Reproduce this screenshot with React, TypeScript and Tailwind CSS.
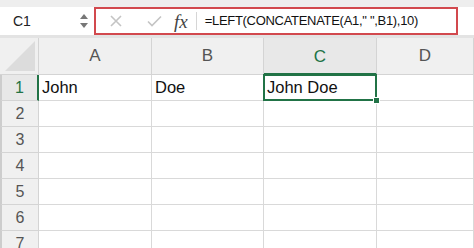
import React from 'react';

const COLS = ['A', 'B', 'C', 'D'];
const ROWS = [1, 2, 3, 4, 5, 6, 7];
const DATA: Record<string, string> = { A1: 'John', B1: 'Doe', C1: 'John Doe' };

export default function App() {
  const selCol = 'C';
  const selRow = 1;

  return (
    <div className="w-[474px] h-[248px] overflow-hidden bg-white font-['Liberation_Sans',Arial,sans-serif] text-[#222]">
      {/* top strip */}
      <div className="h-[7px] bg-[#eeeeee]" />

      {/* formula bar */}
      <div className="h-[28px] flex items-stretch bg-white">
        <div className="w-[94px] flex items-center pl-[13px] pr-[6px]">
          <span className="text-[14px] flex-1">C1</span>
          <div className="flex flex-col items-center gap-[4px]">
            <svg width="8" height="5" viewBox="0 0 8 5"><path d="M4 0L8 5H0Z" fill="#777" /></svg>
            <svg width="8" height="5" viewBox="0 0 8 5"><path d="M0 0H8L4 5Z" fill="#777" /></svg>
          </div>
        </div>
        <div className="w-[364px] border-2 border-[#d2494e] flex items-center">
          <div className="w-[76px] flex items-center justify-between pl-[14px] pr-[10px]">
            <svg width="12" height="12" viewBox="0 0 12 12">
              <path d="M1 1L11 11M11 1L1 11" stroke="#c4c4c4" strokeWidth="1.6" />
            </svg>
            <svg width="15" height="12" viewBox="0 0 15 12">
              <path d="M1 6.5L5 10.5L14 1.5" stroke="#c4c4c4" strokeWidth="1.6" fill="none" />
            </svg>
          </div>
          <span className="font-['Liberation_Serif',serif] italic text-[19px] text-[#444] leading-none pl-[2px] pr-[8px]">fx</span>
          <div className="w-px h-[18px] bg-[#d6d6d6]" />
          <span className="pl-[8px] text-[13px] tracking-[-0.3px] text-[#111] whitespace-pre">=LEFT(CONCATENATE(A1," ",B1),10)</span>
        </div>
      </div>

      {/* separator */}
      <div className="h-[3px] bg-[#e3e3e3]" />

      {/* grid */}
      <div className="grid grid-cols-[39px_113px_112px_113px_97px]">
        {/* corner */}
        <div className="h-[37px] bg-[#f0f0f0] border-r border-b border-[#d4d4d4] relative overflow-hidden">
          <div className="absolute right-[3px] bottom-[3px] w-0 h-0 border-l-[30px] border-l-transparent border-b-[30px] border-b-[#dcdcdc]" />
        </div>
        {COLS.map((c) => (
          <div
            key={c}
            className={
              c === selCol
                ? 'h-[37px] bg-[#e8e8e8] border-r border-[#d4d4d4] border-b-2 border-b-[#217346] flex items-center justify-center text-[17px] text-[#217346] pt-[2px]'
                : 'h-[37px] bg-[#f0f0f0] border-r border-b border-[#d4d4d4] flex items-center justify-center text-[17px] text-[#555]'
            }
          >
            {c}
          </div>
        ))}

        {ROWS.map((r) => (
          <React.Fragment key={r}>
            <div
              className={
                r === selRow
                  ? 'h-[26px] bg-[#e8e8e8] border-l-2 border-l-[#cdcdcd] border-b border-b-[#d4d4d4] border-r-2 border-r-[#217346] flex items-center justify-center text-[16px] text-[#217346]'
                  : 'h-[26px] bg-[#f0f0f0] border-l-2 border-l-[#cdcdcd] border-b border-r border-[#d4d4d4] flex items-center justify-center text-[16px] text-[#555]'
              }
            >
              {r}
            </div>
            {COLS.map((c) => {
              const id = `${c}${r}`;
              const selected = c === selCol && r === selRow;
              return (
                <div
                  key={id}
                  className="h-[26px] border-r border-b border-[#d9d9d9] relative flex items-center pl-[3px] text-[16.5px] text-[#111]"
                >
                  {DATA[id]}
                  {selected && (
                    <div className="absolute z-10 -left-px -top-px -right-px -bottom-px border-2 border-[#217346]">
                      <div className="absolute -right-[5px] -bottom-[5px] w-[7px] h-[7px] bg-[#217346] border border-white" />
                    </div>
                  )}
                </div>
              );
            })}
          </React.Fragment>
        ))}
      </div>
    </div>
  );
}
